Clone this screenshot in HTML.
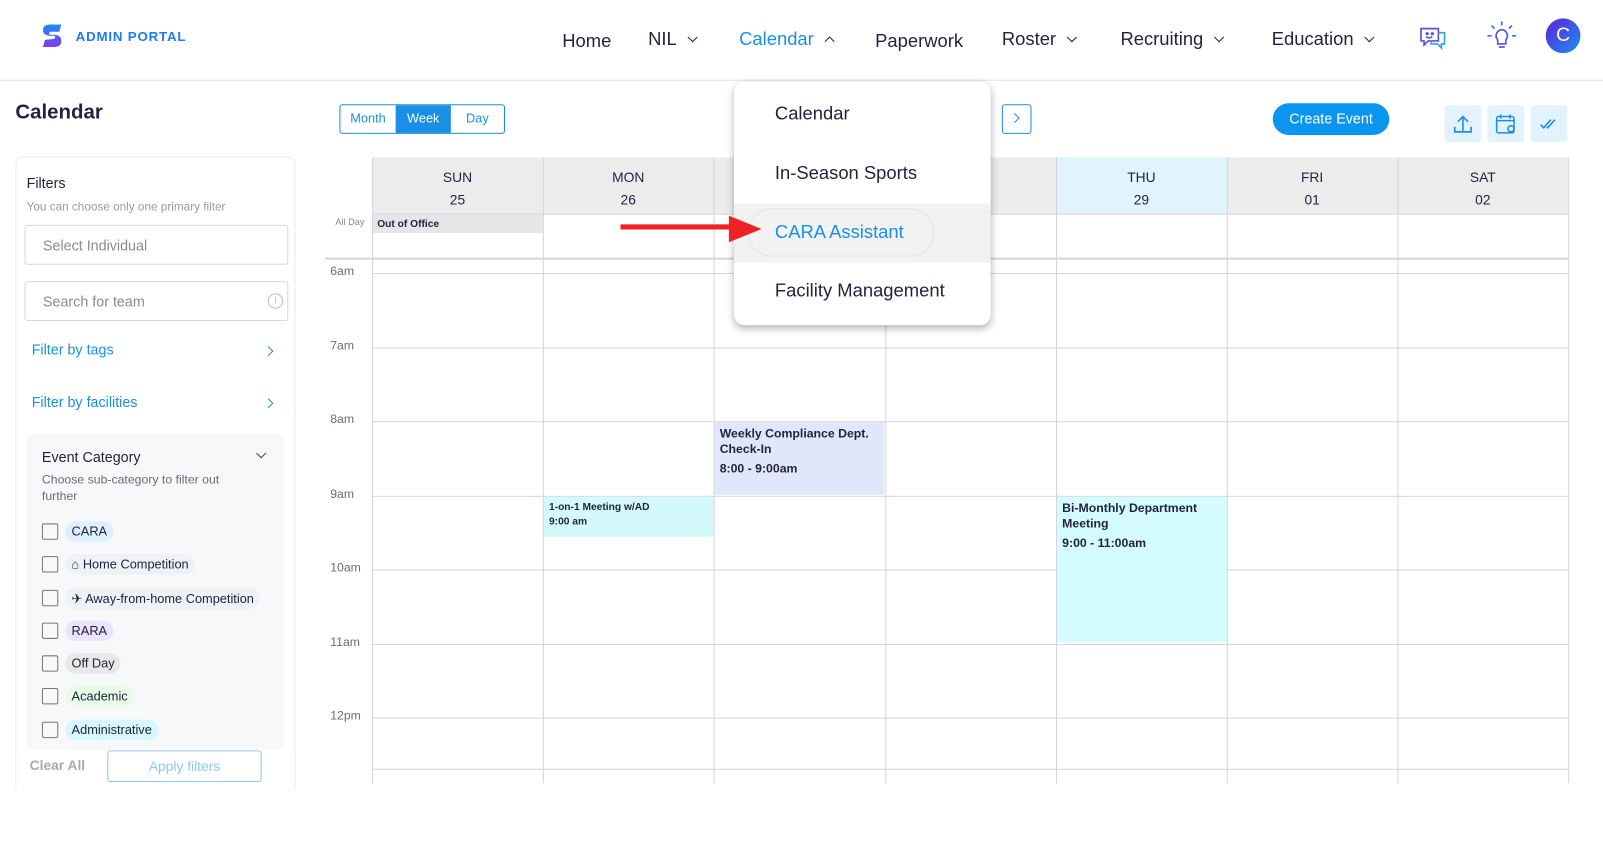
<!DOCTYPE html>
<html><head><meta charset="utf-8"><style>
*{box-sizing:border-box;margin:0;padding:0}
body{width:1603px;height:846px;background:#fff;font-family:"Liberation Sans",sans-serif;color:#23233f;position:relative;overflow:hidden}
#w{position:absolute;left:0;top:0;width:1568px;height:828px;transform:scale(1.0223);transform-origin:0 0}
.a{position:absolute}
.nav{font-size:18px;color:#23233f;top:28px}
.chev{display:inline-block;width:7px;height:7px;border-right:1.6px solid #23233f;border-bottom:1.6px solid #23233f;transform:rotate(45deg);margin-left:12px;position:relative;top:-4px}
.vl{position:absolute;top:154px;height:612px;width:1px;background:#d4d4dc}
.hl{position:absolute;left:364px;width:1170px;height:1px;background:#d4d4dc}
.tl{position:absolute;left:323px;font-size:12px;color:#6b6b7b}
.dh{position:absolute;top:154px;height:55px;text-align:center;font-size:13.5px;line-height:22px;padding-top:9px;background:#ececec}
.cb{position:absolute;left:41px;width:16px;height:16px;border:1.5px solid #777;border-radius:2px}
.tag{position:absolute;left:64px;font-size:12.5px;padding:3px 6px;border-radius:11px;color:#23233f}
.ev{position:absolute;font-size:12px;font-weight:bold;padding:4px 5px;line-height:15px;color:#23233f}
.ib{position:absolute;top:103px;width:36px;height:36px;background:#e3f3fd;border-radius:3px}
</style></head><body><div id="w">
<svg class="a" style="left:40px;top:22px" width="22" height="26" viewBox="0 0 22 26"><defs><linearGradient id="g" x1="0" y1="0" x2="0" y2="1"><stop offset="0" stop-color="#1e8ef0"/><stop offset="1" stop-color="#7c3aed"/></linearGradient></defs><path d="M20 2H9Q2 2 2 8Q2 12 8 13H13Q15 14 13 16L4 17L2 24H13Q20 24 20 18Q20 13 14 12H9Q7 11 9 9H18Z" fill="url(#g)"/></svg>
<div class="a" style="left:74px;top:28px;font-size:13px;font-weight:bold;color:#1e7bf0;letter-spacing:.8px">ADMIN PORTAL</div>
<div class="a nav" style="left:550px;top:30px">Home</div>
<div class="a nav" style="left:634px">NIL<span class="chev"></span></div>
<div class="a nav" style="left:723px;color:#1a8fe6">Calendar<span class="chev" style="transform:rotate(-135deg);top:0;border-color:#23233f"></span></div>
<div class="a nav" style="left:856px;top:30px">Paperwork</div>
<div class="a nav" style="left:980px">Roster<span class="chev"></span></div>
<div class="a nav" style="left:1096px">Recruiting<span class="chev"></span></div>
<div class="a nav" style="left:1244px">Education<span class="chev"></span></div>
<svg class="a" style="left:1388px;top:25px" width="28" height="26" viewBox="0 0 28 26" fill="none" stroke="#5b4fe0" stroke-width="1.6"><path d="M2 3h17v12H9l-4 4v-4H2z"/><path d="M19 7h6v11h-3v4l-4-4h-6v-3" stroke="#2ea0f0"/><circle cx="8" cy="8" r=".8" fill="#5b4fe0"/><circle cx="13" cy="8" r=".8" fill="#5b4fe0"/><path d="M7 11q3 2 6 0"/></svg>
<svg class="a" style="left:1454px;top:20px" width="30" height="32" viewBox="0 0 30 32" fill="none" stroke="#2a7be8" stroke-width="1.6"><path d="M15 1v4M5 5l3 3M25 5l-3 3M1 15h4M25 15h4"/><path d="M15 9a6 6 0 0 0-4 10v4h8v-4a6 6 0 0 0-4-10zM12 26h6" stroke="#5b4fe0"/></svg>
<div class="a" style="left:1512px;top:18px;width:34px;height:34px;border-radius:50%;background:linear-gradient(135deg,#5b21d6,#1e90f0);color:#fff;font-size:19px;text-align:center;line-height:34px">C</div>
<div class="a" style="left:0;top:78px;width:1603px;height:1px;background:#e2e2e6"></div>

<div class="a" style="left:15px;top:99px;font-size:20px;font-weight:bold">Calendar</div>
<div class="a" style="left:15px;top:153px;width:274px;height:620px;border:1px solid #e6e6ea;border-bottom:none;border-radius:8px 8px 0 0"></div>
<div class="a" style="left:26px;top:171px;font-size:14px">Filters</div>
<div class="a" style="left:26px;top:197px;font-size:11.5px;color:#9a9aa6">You can choose only one primary filter</div>
<div class="a" style="left:24px;top:220px;width:258px;height:39px;border:1px solid #d6d6dc;border-radius:3px;font-size:14px;color:#8a8a96;padding:11px 17px">Select Individual</div>
<div class="a" style="left:24px;top:275px;width:258px;height:39px;border:1px solid #d6d6dc;border-radius:3px;font-size:14px;color:#8a8a96;padding:11px 17px">Search for team</div>
<div class="a" style="left:262px;top:287px;width:15px;height:15px;border:1px solid #bbb;border-radius:50%;font-size:10px;color:#bbb;text-align:center;line-height:13px">!</div>
<div class="a" style="left:31px;top:334px;font-size:14px;color:#1a8fe6">Filter by tags</div>
<div class="a" style="left:31px;top:385px;font-size:14px;color:#1a8fe6">Filter by facilities</div>
<div class="a" style="left:259px;top:340px;width:7px;height:7px;border-right:1.5px solid #1a8fe6;border-top:1.5px solid #1a8fe6;transform:rotate(45deg)"></div>
<div class="a" style="left:259px;top:391px;width:7px;height:7px;border-right:1.5px solid #1a8fe6;border-top:1.5px solid #1a8fe6;transform:rotate(45deg)"></div>
<div class="a" style="left:26px;top:424px;width:252px;height:310px;background:#f6f8fa;border-radius:8px"></div>
<div class="a" style="left:41px;top:439px;font-size:14px">Event Category</div>
<div class="a" style="left:252px;top:440px;width:7px;height:7px;border-right:1.4px solid #444;border-bottom:1.4px solid #444;transform:rotate(45deg)"></div>
<div class="a" style="left:41px;top:461px;font-size:12px;color:#6b6b7b;line-height:16px;width:200px">Choose sub-category to filter out further</div>
<div class="cb" style="top:512px"></div><div class="tag" style="top:510px;background:#dff0fd">CARA</div>
<div class="cb" style="top:544px"></div><div class="tag" style="top:542px;background:#eef2f6">⌂ Home Competition</div>
<div class="cb" style="top:577px"></div><div class="tag" style="top:575px;background:#eef2f6">✈ Away-from-home Competition</div>
<div class="cb" style="top:609px"></div><div class="tag" style="top:607px;background:#ece4fb">RARA</div>
<div class="cb" style="top:641px"></div><div class="tag" style="top:639px;background:#e8e8e8">Off Day</div>
<div class="cb" style="top:673px"></div><div class="tag" style="top:671px;background:#e8fbe8">Academic</div>
<div class="cb" style="top:706px"></div><div class="tag" style="top:704px;background:#d6f7fb">Administrative</div>
<div class="a" style="left:16px;top:733px;width:272px;height:40px;background:#fff"></div>
<div class="a" style="left:29px;top:741px;font-size:13.5px;font-weight:bold;color:#aaa">Clear All</div>
<div class="a" style="left:105px;top:734px;width:151px;height:31px;border:1px solid #8cc8f0;border-radius:3px;font-size:13.5px;color:#8cc8f0;text-align:center;line-height:29px">Apply filters</div>

<div class="a" style="left:332px;top:102px;width:162px;height:29px;border:1px solid #1a8fe6;border-radius:3px;font-size:12.5px;color:#1a8fe6;display:flex">
<div style="width:54px;text-align:center;line-height:27px">Month</div><div style="width:54px;text-align:center;line-height:27px;background:#1a8fe6;color:#fff">Week</div><div style="width:52px;text-align:center;line-height:27px">Day</div></div>
<div class="a" style="left:980px;top:102px;width:29px;height:29px;border:1px solid #1a8fe6;border-radius:3px"></div>
<div class="a" style="left:989px;top:112px;width:7px;height:7px;border-right:1.6px solid #1a8fe6;border-top:1.6px solid #1a8fe6;transform:rotate(45deg)"></div>
<div class="a" style="left:1245px;top:101px;width:114px;height:31px;background:#0a96ee;border-radius:16px;color:#fff;font-size:14px;text-align:center;line-height:31px">Create Event</div>
<div class="ib" style="left:1413px"><svg width="36" height="36" viewBox="0 0 36 36" fill="none" stroke="#1a8fe6" stroke-width="1.6"><path d="M18 25V12M13 16l5-5 5 5M10 21v5h16v-5"/></svg></div>
<div class="ib" style="left:1455px"><svg width="36" height="36" viewBox="0 0 36 36" fill="none" stroke="#1a8fe6" stroke-width="1.5"><rect x="9" y="11" width="17" height="16" rx="2"/><path d="M9 15h17M13 9v4M22 9v4"/><circle cx="23" cy="23" r="3" fill="#e3f3fd"/></svg></div>
<div class="ib" style="left:1497px"><svg width="36" height="36" viewBox="0 0 36 36" fill="none" stroke="#1a8fe6" stroke-width="1.6"><path d="M10 19l3 3 7-8M16 21l1 1 7-8"/></svg></div>

<div class="dh" style="left:364px;width:167px">SUN<br>25</div>
<div class="dh" style="left:531px;width:167px">MON<br>26</div>
<div class="dh" style="left:698px;width:168px">TUE<br>27</div>
<div class="dh" style="left:866px;width:167px">WED<br>28</div>
<div class="dh" style="left:1033px;width:167px;background:#e1f3fd">THU<br>29</div>
<div class="dh" style="left:1200px;width:167px">FRI<br>01</div>
<div class="dh" style="left:1367px;width:167px">SAT<br>02</div>
<div class="hl" style="top:209px"></div>
<div class="a" style="left:318px;top:252px;width:1216px;height:2px;background:#d4d4dc"></div>
<div class="hl" style="top:267px"></div><div class="hl" style="top:340px"></div><div class="hl" style="top:412px"></div><div class="hl" style="top:485px"></div><div class="hl" style="top:557px"></div><div class="hl" style="top:630px"></div><div class="hl" style="top:702px"></div><div class="hl" style="top:752px"></div>
<div class="vl" style="left:364px"></div><div class="vl" style="left:531px"></div><div class="vl" style="left:698px"></div><div class="vl" style="left:866px"></div><div class="vl" style="left:1033px"></div><div class="vl" style="left:1200px"></div><div class="vl" style="left:1367px"></div><div class="vl" style="left:1534px"></div>
<div class="a" style="left:328px;top:212px;font-size:9px;color:#888">All Day</div>
<div class="tl" style="top:258px">6am</div><div class="tl" style="top:331px">7am</div><div class="tl" style="top:403px">8am</div><div class="tl" style="top:476px">9am</div><div class="tl" style="top:548px">10am</div><div class="tl" style="top:621px">11am</div><div class="tl" style="top:693px">12pm</div>
<div class="a" style="left:365px;top:210px;width:166px;height:18px;background:#e6e6e8;font-size:10px;font-weight:bold;padding:4px 4px">Out of Office</div>
<div class="ev" style="left:699px;top:413px;width:166px;height:71px;background:#e0e7fb">Weekly Compliance Dept. Check-In<div style="margin-top:4px">8:00 - 9:00am</div></div>
<div class="ev" style="left:532px;top:486px;width:166px;height:39px;background:#d4f9fb;font-size:10px;line-height:14px">1-on-1 Meeting w/AD<br>9:00 am</div>
<div class="ev" style="left:1034px;top:486px;width:166px;height:142px;background:#d4fcfe">Bi-Monthly Department Meeting<div style="margin-top:4px">9:00 - 11:00am</div></div>

<div class="a" style="left:718px;top:80px;width:251px;height:238px;background:#fff;border-radius:10px;box-shadow:0 3px 8px rgba(0,0,0,.3);overflow:hidden">
<div class="a" style="left:40px;top:21px;font-size:18px">Calendar</div>
<div class="a" style="left:40px;top:79px;font-size:18px">In-Season Sports</div>
<div class="a" style="left:0;top:119px;width:251px;height:58px;background:#f2f2f2"></div>
<div class="a" style="left:13px;top:124px;width:183px;height:47px;border:1px solid #e4e4e4;border-radius:24px"></div>
<div class="a" style="left:40px;top:137px;font-size:18px;color:#1a8fe6">CARA Assistant</div>
<div class="a" style="left:40px;top:194px;font-size:18px">Facility Management</div>
</div>
<svg class="a" style="left:605px;top:208px" width="142" height="32"><path d="M2 14h110v-1" stroke="#ee2222" stroke-width="5"/><path d="M108 3l32 13-32 13z" fill="#ee2222"/></svg>
</div></body></html>
